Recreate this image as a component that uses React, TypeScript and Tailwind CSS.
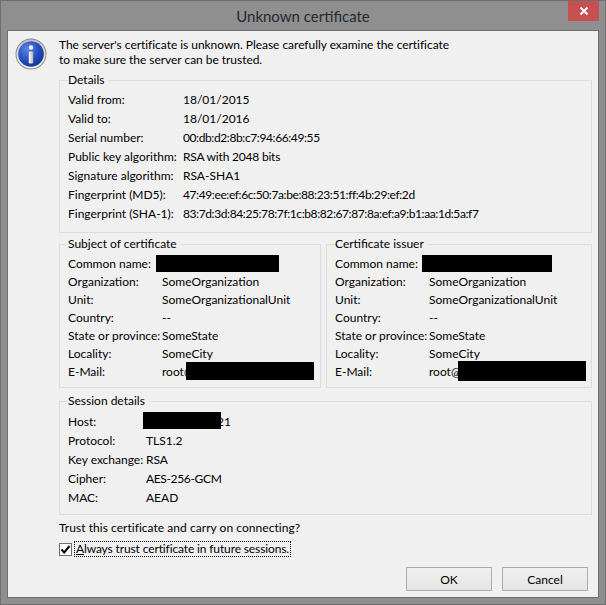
const font = { details: "Lato" };

type Row = { label: string; value: React.ReactNode };

const Hex = ({ children }: { children: string }) => <span className="tracking-[-0.4px]">{children}</span>;

const details: Row[] = [
  { label: "Valid from:", value: "18/01/2015" },
  { label: "Valid to:", value: "18/01/2016" },
  { label: "Serial number:", value: <Hex>00:db:d2:8b:c7:94:66:49:55</Hex> },
  { label: "Public key algorithm:", value: <span className="tracking-[-0.2px]">RSA with 2048 bits</span> },
  { label: "Signature algorithm:", value: "RSA-SHA1" },
  { label: "Fingerprint (MD5):", value: <Hex>47:49:ee:ef:6c:50:7a:be:88:23:51:ff:4b:29:ef:2d</Hex> },
  { label: "Fingerprint (SHA-1):", value: <Hex>83:7d:3d:84:25:78:7f:1c:b8:82:67:87:8a:ef:a9:b1:aa:1d:5a:f7</Hex> },
];

const Redacted = ({ className }: { className: string }) => <span className={`absolute bg-black ${className}`} />;

const party = (nameBar: string, mailBar: string): Row[] => [
  { label: "Common name:", value: <Redacted className={nameBar} /> },
  { label: "Organization:", value: "SomeOrganization" },
  { label: "Unit:", value: "SomeOrganizationalUnit" },
  { label: "Country:", value: "--" },
  { label: "State or province:", value: "SomeState" },
  { label: "Locality:", value: "SomeCity" },
  {
    label: "E-Mail:",
    value: (
      <>
        root@
        <Redacted className={mailBar} />
      </>
    ),
  },
];

const session: Row[] = [
  {
    label: "Host:",
    value: (
      <>
        <span className="pl-[71px]">21</span>
        <Redacted className="left-[-3px] top-[-1px] h-[17px] w-[78px]" />
      </>
    ),
  },
  { label: "Protocol:", value: "TLS1.2" },
  { label: "Key exchange:", value: "RSA" },
  { label: "Cipher:", value: <span className="tracking-[-0.35px]">AES-256-GCM</span> },
  { label: "MAC:", value: "AEAD" },
];

const Group = ({ title, rows, className, gridClass }: { title: string; rows: Row[]; className: string; gridClass: string }) => (
  <fieldset className={`border border-[#dcdcdc] pl-2 ${className}`}>
    <legend className="px-0 pb-[2px] pr-1 leading-[13px]">{title}</legend>
    <div className={`grid ${gridClass}`}>
      {rows.map((row) => (
        <div key={row.label} className="contents">
          <span className="flex items-center whitespace-nowrap pb-[2px]">{row.label}</span>
          <span className="relative flex items-center whitespace-nowrap pb-[2px]">{row.value}</span>
        </div>
      ))}
    </div>
  </fieldset>
);

const InfoIcon = () => (
  <svg width="32" height="32" viewBox="0 0 32 32" className="shrink-0">
    <defs>
      <radialGradient id="blue" cx="0.35" cy="0.3" r="0.8">
        <stop offset="0" stopColor="#5f86e6" />
        <stop offset="0.55" stopColor="#2550c0" />
        <stop offset="1" stopColor="#142f8c" />
      </radialGradient>
      <linearGradient id="ring" x1="0" y1="0" x2="0" y2="1">
        <stop offset="0" stopColor="#c4c4c4" />
        <stop offset="1" stopColor="#efefef" />
      </linearGradient>
      <linearGradient id="stem" x1="0" y1="0" x2="1" y2="0">
        <stop offset="0" stopColor="#ffffff" />
        <stop offset="1" stopColor="#b4b4b4" />
      </linearGradient>
    </defs>
    <circle cx="16" cy="16" r="15.5" fill="#8a8a8a" />
    <circle cx="16" cy="16" r="14.6" fill="url(#ring)" />
    <circle cx="16" cy="16" r="12.8" fill="url(#blue)" />
    <circle cx="16" cy="9.5" r="2.3" fill="#f0f0f0" />
    <rect x="13.8" y="13.5" width="4.4" height="12" rx="1" fill="url(#stem)" />
  </svg>
);

export default function App() {
  return (
    <div
      className="flex h-[605px] w-[606px] flex-col border border-[#6e6e6e] bg-[#8f8f8f] text-[12px] leading-[15px] text-black"
      style={{ fontFamily: `${font.details}, "Liberation Sans", sans-serif` }}
    >
      <div className="relative flex h-[29px] shrink-0 items-start justify-center">
        <span className="mt-[6px] text-[15px] leading-[18px] text-[#222b33]">Unknown certificate</span>
        <div className="absolute right-[6px] top-0 flex h-[20px] w-[31px] items-center justify-center bg-[#c75050]">
          <svg width="10" height="10" viewBox="0 0 10 10">
            <path d="M1.5 1.5l7 7M8.5 1.5l-7 7" stroke="#fff" strokeWidth="2" />
          </svg>
        </div>
      </div>

      <div className="ml-[6px] mr-[6px] flex h-[568px] flex-col border border-[#6e6e6e] bg-[#f0f0f0] pb-[6px] pl-[7px] pr-[6px] pt-[7px]">
        <div className="flex gap-[12px]">
          <InfoIcon />
          <div className="flex w-[533px] flex-col">
            <p className="-mt-px tracking-[-0.04px]">
              The server's certificate is unknown. Please carefully examine the certificate
              <br />
              to make sure the server can be trusted.
            </p>
            <Group title="Details" rows={details} className="mt-[6px] pb-[8px] pt-[3px]" gridClass="grid-cols-[115px_1fr] auto-rows-[19px]" />
            <div className="mt-[4px] flex gap-[5px]">
              <Group
                title="Subject of certificate"
                rows={party("left-[-6px] top-[0px] h-[17px] w-[123px]", "left-[24px] top-[-1px] h-[18px] w-[128px]")}
                className="w-[262px] pb-[6px] pt-[3px]"
                gridClass="grid-cols-[94px_1fr] auto-rows-[18px]"
              />
              <Group
                title="Certificate issuer"
                rows={party("left-[-7px] top-[0px] h-[17px] w-[130px]", "left-[29px] top-[-2px] h-[20px] w-[128px]")}
                className="w-[266px] pb-[6px] pt-[3px]"
                gridClass="grid-cols-[94px_1fr] auto-rows-[18px]"
              />
            </div>
            <Group title="Session details" rows={session} className="mt-[6px] pb-[6px] pt-[4px]" gridClass="grid-cols-[78px_1fr] auto-rows-[19px]" />
            <p className="mt-[5px] tracking-[0.04px]">Trust this certificate and carry on connecting?</p>
            <div className="mt-[6px] flex items-center gap-[2px]">
              <span className="flex h-[13px] w-[13px] items-center justify-center border border-[#707070] bg-white">
                <svg width="11" height="11" viewBox="0 0 11 11">
                  <path d="M1.5 5.5L4.2 8.5L9.5 2" fill="none" stroke="#000" strokeWidth="2" />
                </svg>
              </span>
              <span className="border border-dotted border-black px-px leading-[14px] tracking-[-0.13px]">
                <span className="underline">A</span>lways trust certificate in future sessions.
              </span>
            </div>
          </div>
        </div>
        <div className="mt-auto flex justify-end gap-[10px] pr-[4px]">
          <button className="h-[24px] w-[86px] border border-[#acacac] bg-gradient-to-b from-[#f0f0f0] to-[#e5e5e5]">OK</button>
          <button className="h-[24px] w-[86px] border border-[#acacac] bg-gradient-to-b from-[#f0f0f0] to-[#e5e5e5]">Cancel</button>
        </div>
      </div>
    </div>
  );
}
